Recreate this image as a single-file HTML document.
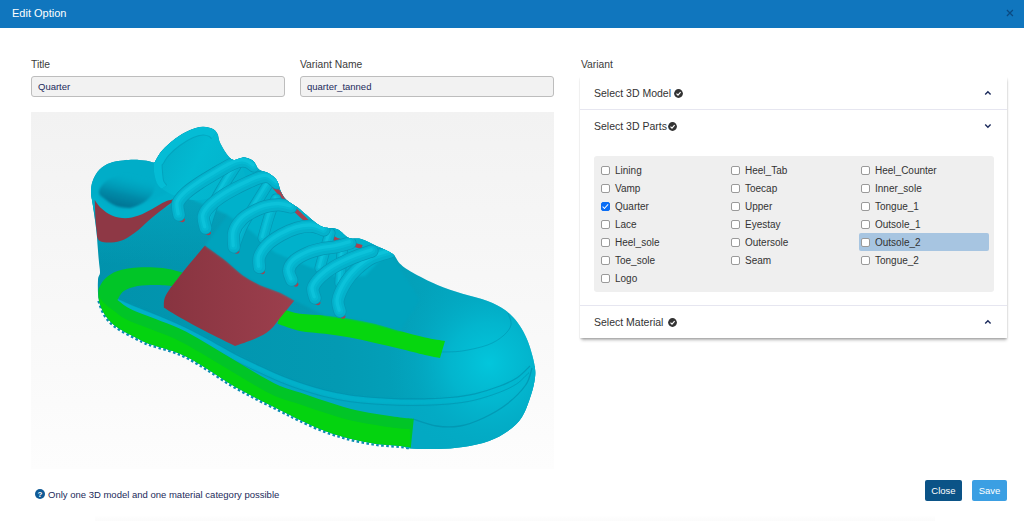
<!DOCTYPE html>
<html><head><meta charset="utf-8">
<style>
*{box-sizing:border-box;margin:0;padding:0}
html,body{width:1024px;height:521px;overflow:hidden;background:#fff;font-family:"Liberation Sans",sans-serif;color:#3a3a3a}
.abs{position:absolute}
.hdr{left:0;top:0;width:1024px;height:27.5px;background:#1076be}
.hdr .t{left:12px;top:6px;font-size:11px;color:#fff;line-height:14px}
.lbl{font-size:10.3px;line-height:12px;color:#3b3b3b}
.inp{height:21px;border:1px solid #bdbdbd;border-radius:3px;background:#f2f2f2;font-size:9.5px;line-height:19px;padding-left:6px;color:#1c2b5c}
.img{left:31px;top:112px;width:523px;height:357px;background:linear-gradient(#f2f2f2,#fdfdfd)}
.panel{left:580px;top:77px;width:427px;height:261px;background:#fff;box-shadow:0 2.5px 3px -0.5px rgba(0,0,0,.3),0 1px 1.5px rgba(0,0,0,.12)}
.ah{left:14px;font-size:10.5px;line-height:14px;color:#333}
.div{left:0;width:427px;height:1px;background:#e6e6f0}
.box{left:14px;top:79px;width:399.5px;height:136px;background:#efefef;border-radius:3px}
.it{position:absolute;width:130px;height:18px;font-size:10px;line-height:19.6px;color:#333;padding-left:16px;border-radius:2px}
.it i{position:absolute;left:2px;top:4.5px;width:9px;height:9px;border:1px solid #9a9a9a;border-radius:2px;background:#fff}
.it.on i:after{content:"";position:absolute;left:2.2px;top:0.2px;width:2.2px;height:4.6px;border:solid #fff;border-width:0 1.3px 1.3px 0;transform:rotate(42deg)}
.it.on i{background:#0b6ef5;border-color:#0b6ef5}
.it.hl{background:#a7c5e1}
.btn{top:480px;height:21px;border-radius:2px;color:#fff;font-size:9.5px;line-height:21px;text-align:center}
</style></head><body>
<div class="abs hdr"><div class="abs t">Edit Option</div>
<svg class="abs" style="left:1006px;top:9px" width="8" height="8" viewBox="0 0 8 8"><path d="M0.9 1L6.9 7M6.9 1L0.9 7" stroke="#0b4a82" stroke-width="1.2" fill="none"/></svg>
</div>
<div class="abs lbl" style="left:31px;top:59px">Title</div>
<div class="abs lbl" style="left:300px;top:59px">Variant Name</div>
<div class="abs lbl" style="left:581px;top:59px">Variant</div>
<div class="abs inp" style="left:31px;top:76px;width:254px">Quarter</div>
<div class="abs inp" style="left:300px;top:76px;width:254px">quarter_tanned</div>
<div class="abs img" id="img"></div>
<svg class="abs" style="left:31px;top:112px" width="523" height="357" viewBox="31 112 523 357">
<defs>
<linearGradient id="gb" gradientUnits="userSpaceOnUse" x1="90" y1="0" x2="540" y2="0"><stop offset="0" stop-color="#0192ac"/><stop offset=".55" stop-color="#039ab3"/><stop offset=".8" stop-color="#03a4bd"/><stop offset="1" stop-color="#03a6c0"/></linearGradient>
<radialGradient id="gtoe" gradientUnits="userSpaceOnUse" cx="489" cy="363" r="100"><stop offset="0" stop-color="#03c6dc" stop-opacity="1"/><stop offset=".4" stop-color="#03bbd3" stop-opacity=".75"/><stop offset=".75" stop-color="#03aec8" stop-opacity=".3"/><stop offset="1" stop-color="#03aac4" stop-opacity="0"/></radialGradient>
<linearGradient id="gop" gradientUnits="userSpaceOnUse" x1="126" y1="208" x2="134" y2="175"><stop offset="0" stop-color="#027393"/><stop offset=".35" stop-color="#0288a6" stop-opacity=".95"/><stop offset=".7" stop-color="#039fbb" stop-opacity=".6"/><stop offset="1" stop-color="#03adc8" stop-opacity="0"/></linearGradient>
<linearGradient id="gtng" gradientUnits="userSpaceOnUse" x1="160" y1="150" x2="235" y2="190"><stop offset="0" stop-color="#03aec8"/><stop offset=".45" stop-color="#02bad2"/><stop offset="1" stop-color="#03b2cb"/></linearGradient>
<linearGradient id="gred" gradientUnits="userSpaceOnUse" x1="165" y1="300" x2="295" y2="300"><stop offset="0" stop-color="#883440"/><stop offset="1" stop-color="#9c3f4d"/></linearGradient>
<filter id="bl" x="-20%" y="-20%" width="140%" height="140%"><feGaussianBlur stdDeviation="2.2"/></filter>
<filter id="bl1" x="-20%" y="-20%" width="140%" height="140%"><feGaussianBlur stdDeviation="1"/></filter>
<linearGradient id="gup" gradientUnits="userSpaceOnUse" x1="0" y1="195" x2="0" y2="265"><stop offset="0" stop-color="#04a2bc" stop-opacity=".9"/><stop offset="1" stop-color="#04a2bc" stop-opacity="0"/></linearGradient>
<clipPath id="ct"><path d="M154.0 163.0C154.4 160.2 155.6 160.2 157.0 158.0C158.4 155.8 159.5 153.2 162.5 150.0C165.5 146.8 170.4 142.1 175.0 138.8C179.6 135.4 185.4 132.0 190.0 130.0C194.6 128.0 198.8 127.0 202.5 126.8C206.2 126.5 210.0 127.6 212.5 128.8C215.0 129.9 216.2 131.5 217.5 133.8C218.8 136.0 218.3 139.0 220.0 142.5C221.7 146.0 225.2 152.1 227.5 155.0C229.8 157.9 230.8 156.7 233.7 160.0C236.6 163.3 245.6 170.0 245.0 175.0C244.4 180.0 237.5 185.8 230.0 190.0C222.5 194.2 209.0 199.0 200.0 200.0C191.0 201.0 182.0 197.7 176.0 196.0C170.0 194.3 167.0 191.8 164.0 190.0C161.0 188.2 159.6 187.5 158.0 185.0C156.4 182.5 155.2 178.7 154.5 175.0C153.8 171.3 153.6 165.8 154.0 163.0Z"/></clipPath>
<clipPath id="cb"><path d="M91.0 192.0C91.0 188.4 91.3 184.7 92.7 181.0C94.1 177.3 96.5 172.7 99.6 169.6C102.6 166.5 105.8 164.3 111.0 162.7C116.2 161.1 125.1 160.1 131.0 159.8C136.9 159.5 142.8 160.4 146.6 160.8C150.4 161.2 152.3 163.0 154.0 162.5C155.7 162.0 155.6 160.1 157.0 158.0C158.4 155.9 159.5 153.2 162.5 150.0C165.5 146.8 170.4 142.1 175.0 138.8C179.6 135.4 185.4 132.0 190.0 130.0C194.6 128.0 198.8 127.0 202.5 126.8C206.2 126.5 210.0 127.6 212.5 128.8C215.0 129.9 216.2 131.5 217.5 133.8C218.8 136.0 218.3 139.0 220.0 142.5C221.7 146.0 225.2 152.1 227.5 155.0C229.8 157.9 231.0 159.6 233.7 160.0C236.4 160.4 240.3 157.3 243.5 157.4C246.7 157.5 250.4 158.8 253.0 160.8C255.6 162.8 256.3 167.5 259.0 169.6C261.7 171.7 266.0 171.7 269.0 173.5C272.0 175.3 274.9 177.4 276.8 180.3C278.8 183.2 279.1 187.7 280.7 191.0C282.3 194.3 283.6 197.2 286.5 200.0C289.4 202.8 294.8 205.3 298.0 207.7C301.2 210.1 303.3 212.3 306.0 214.6C308.7 216.9 311.1 219.3 314.0 221.4C316.9 223.5 319.8 226.0 323.7 227.3C327.6 228.6 333.2 227.5 337.4 229.3C341.6 231.1 345.1 236.4 349.0 238.0C352.9 239.6 356.4 237.7 361.0 239.0C365.6 240.3 371.2 243.5 376.5 246.0C381.8 248.5 388.6 250.8 392.5 253.8C396.4 256.7 396.7 260.6 400.0 263.8C403.3 266.9 406.2 269.0 412.5 272.5C418.8 276.0 429.2 281.5 437.5 285.0C445.8 288.5 454.2 291.1 462.5 293.8C470.8 296.4 480.4 298.3 487.5 301.0C494.6 303.7 500.0 306.4 505.0 310.0C510.0 313.6 514.2 318.3 517.5 322.5C520.8 326.7 522.9 330.8 525.0 335.0C527.1 339.2 528.4 342.5 530.0 347.5C531.6 352.5 533.7 360.0 534.5 365.0C535.3 370.0 535.6 372.5 535.0 377.5C534.4 382.5 533.2 388.4 531.0 395.0C528.8 401.6 525.8 411.0 522.0 417.0C518.2 423.0 513.5 427.0 508.0 431.0C502.5 435.0 496.5 438.3 489.0 441.0C481.5 443.7 471.6 445.7 463.0 447.0C454.4 448.3 446.2 448.8 437.5 449.0C428.8 449.2 417.2 449.0 411.0 448.5C404.8 448.0 406.0 446.8 400.0 446.0C394.0 445.2 383.3 445.0 375.0 443.8C366.7 442.5 358.3 440.9 350.0 438.8C341.7 436.6 333.3 434.1 325.0 431.0C316.7 427.9 307.5 423.5 300.0 420.0C292.5 416.5 287.5 413.8 280.0 410.0C272.5 406.2 263.3 401.9 255.0 397.5C246.7 393.1 238.3 388.8 230.0 383.8C221.7 378.8 213.3 372.5 205.0 367.5C196.7 362.5 188.8 357.5 180.0 353.8C171.2 350.0 158.8 347.1 152.5 345.0C146.2 342.9 148.3 343.9 142.5 341.0C136.7 338.1 123.8 331.8 117.5 327.5C111.2 323.2 108.1 319.6 105.0 315.0C101.9 310.4 99.9 305.8 98.8 300.0C97.6 294.2 97.8 284.6 98.0 280.0C98.2 275.4 99.9 275.8 100.0 272.5C100.1 269.2 99.2 265.9 98.8 260.0C98.2 254.1 97.6 243.7 97.0 237.0C96.4 230.3 95.8 225.8 95.0 220.0C94.2 214.2 93.2 207.2 92.5 202.5C91.8 197.8 91.0 195.6 91.0 192.0Z"/></clipPath>
</defs>
<path d="M98.8 300.0C99.8 302.5 101.9 310.4 105.0 315.0C108.1 319.6 111.2 323.2 117.5 327.5C123.8 331.8 136.7 338.1 142.5 341.0C148.3 343.9 146.2 342.9 152.5 345.0C158.8 347.1 171.2 350.0 180.0 353.8C188.8 357.5 196.7 362.5 205.0 367.5C213.3 372.5 221.7 378.8 230.0 383.8C238.3 388.8 246.7 393.1 255.0 397.5C263.3 401.9 272.5 406.2 280.0 410.0C287.5 413.8 292.5 416.5 300.0 420.0C307.5 423.5 316.7 427.9 325.0 431.0C333.3 434.1 341.7 436.6 350.0 438.8C358.3 440.9 366.7 442.5 375.0 443.8C383.3 445.0 394.0 445.4 400.0 446.0C406.0 446.6 409.0 447.2 410.8 447.5" stroke="#0a8bb0" stroke-width="2.4" stroke-dasharray="2.6 2.4" fill="none" transform="translate(-0.4,0.9)"/>
<path d="M91.0 192.0C91.0 188.4 91.3 184.7 92.7 181.0C94.1 177.3 96.5 172.7 99.6 169.6C102.6 166.5 105.8 164.3 111.0 162.7C116.2 161.1 125.1 160.1 131.0 159.8C136.9 159.5 142.8 160.4 146.6 160.8C150.4 161.2 152.3 163.0 154.0 162.5C155.7 162.0 155.6 160.1 157.0 158.0C158.4 155.9 159.5 153.2 162.5 150.0C165.5 146.8 170.4 142.1 175.0 138.8C179.6 135.4 185.4 132.0 190.0 130.0C194.6 128.0 198.8 127.0 202.5 126.8C206.2 126.5 210.0 127.6 212.5 128.8C215.0 129.9 216.2 131.5 217.5 133.8C218.8 136.0 218.3 139.0 220.0 142.5C221.7 146.0 225.2 152.1 227.5 155.0C229.8 157.9 231.0 159.6 233.7 160.0C236.4 160.4 240.3 157.3 243.5 157.4C246.7 157.5 250.4 158.8 253.0 160.8C255.6 162.8 256.3 167.5 259.0 169.6C261.7 171.7 266.0 171.7 269.0 173.5C272.0 175.3 274.9 177.4 276.8 180.3C278.8 183.2 279.1 187.7 280.7 191.0C282.3 194.3 283.6 197.2 286.5 200.0C289.4 202.8 294.8 205.3 298.0 207.7C301.2 210.1 303.3 212.3 306.0 214.6C308.7 216.9 311.1 219.3 314.0 221.4C316.9 223.5 319.8 226.0 323.7 227.3C327.6 228.6 333.2 227.5 337.4 229.3C341.6 231.1 345.1 236.4 349.0 238.0C352.9 239.6 356.4 237.7 361.0 239.0C365.6 240.3 371.2 243.5 376.5 246.0C381.8 248.5 388.6 250.8 392.5 253.8C396.4 256.7 396.7 260.6 400.0 263.8C403.3 266.9 406.2 269.0 412.5 272.5C418.8 276.0 429.2 281.5 437.5 285.0C445.8 288.5 454.2 291.1 462.5 293.8C470.8 296.4 480.4 298.3 487.5 301.0C494.6 303.7 500.0 306.4 505.0 310.0C510.0 313.6 514.2 318.3 517.5 322.5C520.8 326.7 522.9 330.8 525.0 335.0C527.1 339.2 528.4 342.5 530.0 347.5C531.6 352.5 533.7 360.0 534.5 365.0C535.3 370.0 535.6 372.5 535.0 377.5C534.4 382.5 533.2 388.4 531.0 395.0C528.8 401.6 525.8 411.0 522.0 417.0C518.2 423.0 513.5 427.0 508.0 431.0C502.5 435.0 496.5 438.3 489.0 441.0C481.5 443.7 471.6 445.7 463.0 447.0C454.4 448.3 446.2 448.8 437.5 449.0C428.8 449.2 417.2 449.0 411.0 448.5C404.8 448.0 406.0 446.8 400.0 446.0C394.0 445.2 383.3 445.0 375.0 443.8C366.7 442.5 358.3 440.9 350.0 438.8C341.7 436.6 333.3 434.1 325.0 431.0C316.7 427.9 307.5 423.5 300.0 420.0C292.5 416.5 287.5 413.8 280.0 410.0C272.5 406.2 263.3 401.9 255.0 397.5C246.7 393.1 238.3 388.8 230.0 383.8C221.7 378.8 213.3 372.5 205.0 367.5C196.7 362.5 188.8 357.5 180.0 353.8C171.2 350.0 158.8 347.1 152.5 345.0C146.2 342.9 148.3 343.9 142.5 341.0C136.7 338.1 123.8 331.8 117.5 327.5C111.2 323.2 108.1 319.6 105.0 315.0C101.9 310.4 99.9 305.8 98.8 300.0C97.6 294.2 97.8 284.6 98.0 280.0C98.2 275.4 99.9 275.8 100.0 272.5C100.1 269.2 99.2 265.9 98.8 260.0C98.2 254.1 97.6 243.7 97.0 237.0C96.4 230.3 95.8 225.8 95.0 220.0C94.2 214.2 93.2 207.2 92.5 202.5C91.8 197.8 91.0 195.6 91.0 192.0Z" fill="url(#gb)"/>
<g clip-path="url(#cb)">
<rect x="90" y="190" width="230" height="80" fill="url(#gup)"/>
<path d="M86 206L86 165L100 152L160 152L184 196Q140 226 100 215Z" fill="#03adc8" filter="url(#bl1)"/>
<path d="M99.0 193.0C99.4 195.6 103.3 197.7 105.5 199.5C107.7 201.3 109.8 202.8 112.0 204.0C114.2 205.2 115.8 206.2 119.0 206.8C122.2 207.4 127.0 208.4 131.0 207.8C134.9 207.2 139.7 204.6 142.7 203.0C145.7 201.4 147.2 199.8 149.0 198.0C150.8 196.2 152.7 194.3 153.5 192.0C154.3 189.7 154.9 186.5 154.0 184.0C153.1 181.5 151.7 178.7 148.0 177.0C144.3 175.3 137.7 174.0 132.0 174.0C126.3 174.0 118.8 175.3 114.0 177.0C109.2 178.7 105.5 181.3 103.0 184.0C100.5 186.7 98.6 190.4 99.0 193.0Z" fill="url(#gop)" filter="url(#bl1)"/>
<path d="M92.0 197.0C92.8 198.0 94.8 200.9 97.0 203.0C99.2 205.1 102.0 207.8 105.0 209.5C108.0 211.2 111.5 212.6 115.0 213.5C118.5 214.4 122.0 215.1 126.0 214.8C130.0 214.5 134.5 213.2 139.0 211.5C143.5 209.8 148.5 206.8 153.0 204.5C157.5 202.2 161.8 199.7 166.0 198.0C170.2 196.3 176.0 195.1 178.0 194.5" stroke="#03b0ca" stroke-width="8" fill="none" filter="url(#bl1)"/>
<path d="M117.0 298.0C120.0 299.3 127.8 303.0 135.0 306.0C142.2 309.0 151.7 312.5 160.0 316.0C168.3 319.5 176.7 323.0 185.0 327.0C193.3 331.0 201.7 335.5 210.0 340.0C218.3 344.5 226.7 349.7 235.0 354.0C243.3 358.3 252.5 362.5 260.0 366.0C267.5 369.5 273.3 372.2 280.0 375.0C286.7 377.8 292.5 380.0 300.0 382.5C307.5 385.0 316.7 387.9 325.0 390.0C333.3 392.1 341.7 393.8 350.0 395.0C358.3 396.2 366.7 396.9 375.0 397.5C383.3 398.1 391.7 398.5 400.0 398.8C408.3 399.0 416.7 399.0 425.0 398.8C433.3 398.5 441.7 398.3 450.0 397.5C458.3 396.7 466.7 395.7 475.0 393.8C483.3 391.8 492.9 388.7 500.0 386.0C507.1 383.3 512.5 380.8 517.5 377.5C522.5 374.2 527.9 367.9 530.0 366.0L560 366L560 470L100 470Z" fill="#03a9c3"/>
<circle cx="489" cy="363" r="100" fill="url(#gtoe)"/>
<path d="M117.0 298.0C120.0 299.3 127.8 303.0 135.0 306.0C142.2 309.0 151.7 312.5 160.0 316.0C168.3 319.5 176.7 323.0 185.0 327.0C193.3 331.0 201.7 335.5 210.0 340.0C218.3 344.5 226.7 349.7 235.0 354.0C243.3 358.3 252.5 362.5 260.0 366.0C267.5 369.5 273.3 372.2 280.0 375.0C286.7 377.8 292.5 380.0 300.0 382.5C307.5 385.0 316.7 387.9 325.0 390.0C333.3 392.1 341.7 393.8 350.0 395.0C358.3 396.2 366.7 396.9 375.0 397.5C383.3 398.1 391.7 398.5 400.0 398.8C408.3 399.0 416.7 399.0 425.0 398.8C433.3 398.5 441.7 398.3 450.0 397.5C458.3 396.7 466.7 395.7 475.0 393.8C483.3 391.8 492.9 388.7 500.0 386.0C507.1 383.3 512.5 380.8 517.5 377.5C522.5 374.2 527.9 367.9 530.0 366.0" stroke="#04b6cf" stroke-width="5" fill="none" opacity=".6" transform="translate(0,3)" filter="url(#bl1)"/>
<path d="M117.0 298.0C120.0 299.3 127.8 303.0 135.0 306.0C142.2 309.0 151.7 312.5 160.0 316.0C168.3 319.5 176.7 323.0 185.0 327.0C193.3 331.0 201.7 335.5 210.0 340.0C218.3 344.5 226.7 349.7 235.0 354.0C243.3 358.3 252.5 362.5 260.0 366.0C267.5 369.5 273.3 372.2 280.0 375.0C286.7 377.8 292.5 380.0 300.0 382.5C307.5 385.0 316.7 387.9 325.0 390.0C333.3 392.1 341.7 393.8 350.0 395.0C358.3 396.2 366.7 396.9 375.0 397.5C383.3 398.1 391.7 398.5 400.0 398.8C408.3 399.0 416.7 399.0 425.0 398.8C433.3 398.5 441.7 398.3 450.0 397.5C458.3 396.7 466.7 395.7 475.0 393.8C483.3 391.8 492.9 388.7 500.0 386.0C507.1 383.3 512.5 380.8 517.5 377.5C522.5 374.2 527.9 367.9 530.0 366.0" stroke="#028aa6" stroke-width="1.2" fill="none" opacity=".6"/>
<path d="M117.0 298.0C120.0 299.3 127.8 303.0 135.0 306.0C142.2 309.0 151.7 312.5 160.0 316.0C168.3 319.5 176.7 323.0 185.0 327.0C193.3 331.0 201.7 335.5 210.0 340.0C218.3 344.5 226.7 349.7 235.0 354.0C243.3 358.3 252.5 362.5 260.0 366.0C267.5 369.5 273.3 372.2 280.0 375.0C286.7 377.8 292.5 380.0 300.0 382.5C307.5 385.0 316.7 387.9 325.0 390.0C333.3 392.1 341.7 393.8 350.0 395.0C358.3 396.2 366.7 396.9 375.0 397.5C383.3 398.1 391.7 398.5 400.0 398.8C408.3 399.0 416.7 399.0 425.0 398.8C433.3 398.5 441.7 398.3 450.0 397.5C458.3 396.7 466.7 395.7 475.0 393.8C483.3 391.8 492.9 388.7 500.0 386.0C507.1 383.3 512.5 380.8 517.5 377.5C522.5 374.2 527.9 367.9 530.0 366.0" stroke="#028aa6" stroke-width="1" fill="none" opacity=".5" transform="translate(-1,6.5)"/>
<path d="M413.0 419.0C416.9 420.2 428.8 424.8 436.6 426.0C444.4 427.2 452.2 427.3 460.0 426.0C467.8 424.7 475.7 421.7 483.5 418.0C491.3 414.3 500.0 409.5 507.0 404.0C514.0 398.5 521.5 391.0 525.7 385.0C529.9 379.0 531.0 370.8 532.0 368.0" stroke="#028aa6" stroke-width="1.3" fill="none" opacity=".6"/>
<path d="M440.0 352.0C443.7 351.8 454.1 352.2 462.0 351.0C469.9 349.8 480.7 347.5 487.5 345.0C494.3 342.5 499.1 339.3 503.0 336.0C506.9 332.7 510.2 328.8 511.0 325.0C511.8 321.2 508.5 315.0 508.0 313.0" stroke="#028aa6" stroke-width="1" fill="none" opacity=".45"/>
<path d="M117.5 300.0C119.6 301.5 123.8 305.6 130.0 308.8C136.2 311.9 146.7 315.4 155.0 318.8C163.3 322.1 171.7 324.8 180.0 328.8C188.3 332.7 196.7 337.7 205.0 342.5C213.3 347.3 221.7 352.5 230.0 357.5C238.3 362.5 246.7 367.8 255.0 372.5C263.3 377.2 272.5 382.7 280.0 386.0C287.5 389.3 292.5 390.0 300.0 392.5C307.5 395.0 316.7 398.3 325.0 401.0C333.3 403.7 341.7 406.6 350.0 408.8C358.3 410.9 366.7 412.3 375.0 413.8C383.3 415.2 393.5 416.7 400.0 417.5C406.5 418.3 411.5 418.5 413.8 418.8L410.8 447.5C409.0 447.2 406.0 446.6 400.0 446.0C394.0 445.4 383.3 445.0 375.0 443.8C366.7 442.5 358.3 440.9 350.0 438.8C341.7 436.6 333.3 434.1 325.0 431.0C316.7 427.9 307.5 423.5 300.0 420.0C292.5 416.5 287.5 413.8 280.0 410.0C272.5 406.2 263.3 401.9 255.0 397.5C246.7 393.1 238.3 388.8 230.0 383.8C221.7 378.8 213.3 372.5 205.0 367.5C196.7 362.5 188.8 357.5 180.0 353.8C171.2 350.0 158.8 347.1 152.5 345.0C146.2 342.9 148.3 343.9 142.5 341.0C136.7 338.1 123.8 331.8 117.5 327.5C111.2 323.2 108.1 319.6 105.0 315.0C101.9 310.4 99.8 304.3 98.8 300.0C97.7 295.7 98.5 290.8 98.5 289.0C99.6 287.3 101.8 281.8 105.0 278.8C108.2 275.8 112.1 272.9 117.5 271.0C122.9 269.1 130.0 268.0 137.5 267.5C145.0 267.0 155.0 267.2 162.5 268.0C170.0 268.8 179.2 271.8 182.5 272.5L172.5 286.0C169.6 285.8 160.8 285.0 155.0 285.0C149.2 285.0 142.7 285.0 137.5 286.0C132.3 287.0 127.1 288.7 123.8 291.0C120.4 293.3 118.5 298.5 117.5 300.0Z" fill="#01c527"/>
<path d="M98.5 296.0C99.4 297.2 101.5 300.6 104.0 303.0C106.5 305.4 109.8 307.8 113.5 310.5C117.2 313.2 119.8 316.1 126.0 319.2C132.2 322.4 142.7 325.9 151.0 329.2C159.3 332.6 167.7 335.3 176.0 339.2C184.3 343.2 192.7 348.2 201.0 353.0C209.3 357.8 217.7 363.0 226.0 368.0C234.3 373.0 242.7 378.2 251.0 383.0C259.3 387.8 268.5 393.2 276.0 396.5C283.5 399.8 288.5 400.5 296.0 403.0C303.5 405.5 312.7 408.8 321.0 411.5C329.3 414.2 337.7 417.1 346.0 419.2C354.3 421.4 362.7 422.8 371.0 424.2C379.3 425.7 389.5 427.2 396.0 428.0C402.5 428.8 407.5 429.0 409.8 429.2L410.8 447.5C409.0 447.2 406.0 446.6 400.0 446.0C394.0 445.4 383.3 445.0 375.0 443.8C366.7 442.5 358.3 440.9 350.0 438.8C341.7 436.6 333.3 434.1 325.0 431.0C316.7 427.9 307.5 423.5 300.0 420.0C292.5 416.5 287.5 413.8 280.0 410.0C272.5 406.2 263.3 401.9 255.0 397.5C246.7 393.1 238.3 388.8 230.0 383.8C221.7 378.8 213.3 372.5 205.0 367.5C196.7 362.5 188.8 357.5 180.0 353.8C171.2 350.0 158.8 347.1 152.5 345.0C146.2 342.9 148.3 343.9 142.5 341.0C136.7 338.1 123.8 331.8 117.5 327.5C111.2 323.2 108.1 319.6 105.0 315.0C101.9 310.4 99.8 302.5 98.8 300.0Z" fill="#04d30f"/>
<path d="M282.0 309.0C285.0 309.8 292.8 312.7 300.0 313.8C307.2 314.8 316.7 314.7 325.0 315.5C333.3 316.3 341.7 317.4 350.0 318.8C358.3 320.1 366.7 321.7 375.0 323.8C383.3 325.8 391.7 328.7 400.0 331.0C408.3 333.3 417.5 335.8 425.0 337.5C432.5 339.2 441.7 340.4 445.0 341.0L440.0 358.0C437.5 357.5 431.7 356.5 425.0 355.0C418.3 353.5 408.3 350.8 400.0 348.8C391.7 346.8 383.3 344.9 375.0 343.0C366.7 341.1 358.3 339.0 350.0 337.5C341.7 336.0 333.3 334.8 325.0 333.8C316.7 332.7 307.9 332.7 300.0 331.0C292.1 329.3 281.2 325.0 277.5 323.8Z" fill="#06d60f"/>
<path d="M205.0 245.5C208.3 247.9 218.8 255.1 225.0 260.0C231.2 264.9 236.7 270.8 242.5 275.0C248.3 279.2 253.8 282.1 260.0 285.0C266.2 287.9 274.2 289.9 280.0 292.5C285.8 295.1 292.1 299.2 294.5 300.5C292.5 302.9 286.6 310.1 282.5 315.0C278.4 319.9 274.6 326.0 270.0 330.0C265.4 334.0 260.8 336.1 255.0 338.8C249.2 341.4 238.3 344.8 235.0 346.0C230.0 343.5 214.2 335.8 205.0 331.0C195.8 326.2 186.9 321.4 180.0 317.5C173.1 313.6 166.5 309.2 163.8 307.5C164.1 305.4 162.9 300.8 166.0 295.0C169.1 289.2 176.0 280.8 182.5 272.5C189.0 264.2 201.2 250.0 205.0 245.5Z" fill="url(#gred)"/>
<path d="M94.7 200.0C95.8 201.3 98.1 205.4 101.0 208.0C103.9 210.6 107.9 213.9 111.9 215.6C116.0 217.3 120.8 218.3 125.3 218.3C129.8 218.3 134.2 217.2 138.7 215.6C143.2 214.0 147.7 211.2 152.2 208.9C156.7 206.6 161.3 203.2 165.6 201.5C169.8 199.8 175.7 199.2 177.7 198.8C175.7 200.2 169.8 203.8 165.6 206.9C161.3 210.0 156.7 213.8 152.2 217.6C147.7 221.4 142.5 226.6 138.7 229.7C134.9 232.8 132.4 234.5 129.3 236.4C126.2 238.3 123.4 240.0 120.0 241.0C116.6 242.0 112.4 242.5 109.0 242.5C105.6 242.5 101.8 242.0 99.8 241.0C97.8 240.0 97.5 237.2 97.0 236.4L95.5 220Z" fill="#8e3845"/>
<path d="M230.0 212.0L205.0 245.5L225.0 260.0L242.5 275.0L260.0 285.0L280.0 292.5L294.5 300.5L325.0 315.5L350.0 318.8L375.0 323.8L400.0 331.0L420.0 300.0L392.0 256.0L300.0 200.0Z" fill="#04a3bd" filter="url(#bl1)"/>
<path d="M160.0 183.0L170.0 187.0L195.5 201.0L226.8 214.6L252.3 232.3L275.0 252.7L312.0 268.0L340.0 278.0L365.0 276.0L386.0 254.0L380.0 240.0L300.0 200.0L250.0 150.0Z" fill="#03b1cb" filter="url(#bl1)"/>
<path d="M268 180L290 205L312 226L337 240L362 247" stroke="#a8424f" stroke-width="4" fill="none"/>
<path d="M154.0 163.0C154.4 160.2 155.6 160.2 157.0 158.0C158.4 155.8 159.5 153.2 162.5 150.0C165.5 146.8 170.4 142.1 175.0 138.8C179.6 135.4 185.4 132.0 190.0 130.0C194.6 128.0 198.8 127.0 202.5 126.8C206.2 126.5 210.0 127.6 212.5 128.8C215.0 129.9 216.2 131.5 217.5 133.8C218.8 136.0 218.3 139.0 220.0 142.5C221.7 146.0 225.2 152.1 227.5 155.0C229.8 157.9 230.8 156.7 233.7 160.0C236.6 163.3 245.6 170.0 245.0 175.0C244.4 180.0 237.5 185.8 230.0 190.0C222.5 194.2 209.0 199.0 200.0 200.0C191.0 201.0 182.0 197.7 176.0 196.0C170.0 194.3 167.0 191.8 164.0 190.0C161.0 188.2 159.6 187.5 158.0 185.0C156.4 182.5 155.2 178.7 154.5 175.0C153.8 171.3 153.6 165.8 154.0 163.0Z" fill="url(#gtng)"/>
<g clip-path="url(#ct)"><path d="M160.0 190.0C159.3 189.0 156.9 186.5 156.0 184.0C155.1 181.5 154.8 178.5 154.5 175.0C154.2 171.5 153.6 165.8 154.0 163.0C154.4 160.2 155.6 160.2 157.0 158.0C158.4 155.8 159.5 153.2 162.5 150.0C165.5 146.8 170.4 142.1 175.0 138.8C179.6 135.4 185.4 132.0 190.0 130.0C194.6 128.0 198.8 127.0 202.5 126.8C206.2 126.5 210.2 127.9 212.5 128.8C214.8 129.6 215.8 131.5 216.5 132.0" stroke="#0399b5" stroke-width="17.5" fill="none" opacity=".55"/><path d="M160.0 190.0C159.3 189.0 156.9 186.5 156.0 184.0C155.1 181.5 154.8 178.5 154.5 175.0C154.2 171.5 153.6 165.8 154.0 163.0C154.4 160.2 155.6 160.2 157.0 158.0C158.4 155.8 159.5 153.2 162.5 150.0C165.5 146.8 170.4 142.1 175.0 138.8C179.6 135.4 185.4 132.0 190.0 130.0C194.6 128.0 198.8 127.0 202.5 126.8C206.2 126.5 210.2 127.9 212.5 128.8C214.8 129.6 215.8 131.5 216.5 132.0" stroke="#04bcd5" stroke-width="15.5" fill="none"/></g>
<ellipse cx="180.6" cy="218.9" rx="4.6" ry="2.6" fill="#a8424f" transform="rotate(25 180.6 218.9)"/><ellipse cx="206.6" cy="231.9" rx="4.6" ry="2.6" fill="#a8424f" transform="rotate(25 206.6 231.9)"/><ellipse cx="235.1" cy="250.4" rx="4.6" ry="2.6" fill="#a8424f" transform="rotate(25 235.1 250.4)"/><ellipse cx="260.6" cy="270.9" rx="4.6" ry="2.6" fill="#a8424f" transform="rotate(25 260.6 270.9)"/><ellipse cx="294.1" cy="283.4" rx="4.6" ry="2.6" fill="#a8424f" transform="rotate(25 294.1 283.4)"/><ellipse cx="316.1" cy="301.9" rx="4.6" ry="2.6" fill="#a8424f" transform="rotate(25 316.1 301.9)"/><ellipse cx="341.1" cy="315.4" rx="4.6" ry="2.6" fill="#a8424f" transform="rotate(25 341.1 315.4)"/>
<path d="M206.0 226.0C207.2 222.5 210.0 211.8 213.0 205.0C216.0 198.2 220.2 191.5 224.0 185.0C227.8 178.5 234.0 169.2 236.0 166.0" stroke="#0497b3" stroke-width="11.0" fill="none" stroke-linecap="round"/><path d="M206.0 226.0C207.2 222.5 210.0 211.8 213.0 205.0C216.0 198.2 220.2 191.5 224.0 185.0C227.8 178.5 234.0 169.2 236.0 166.0" stroke="#04b1cb" stroke-width="9.6" fill="none" stroke-linecap="round"/><path d="M206.0 226.0C207.2 222.5 210.0 211.8 213.0 205.0C216.0 198.2 220.2 191.5 224.0 185.0C227.8 178.5 234.0 169.2 236.0 166.0" stroke="#05b9d2" stroke-width="6.0" fill="none" stroke-linecap="round" transform="translate(-0.5,-0.8)"/><path d="M206.0 226.0C207.2 222.5 210.0 211.8 213.0 205.0C216.0 198.2 220.2 191.5 224.0 185.0C227.8 178.5 234.0 169.2 236.0 166.0" stroke="#0cc2da" stroke-width="2.8" fill="none" stroke-linecap="round" transform="translate(-0.8,-1.2)"/><path d="M235.0 245.0C236.3 241.7 239.7 231.7 243.0 225.0C246.3 218.3 250.8 211.8 255.0 205.0C259.2 198.2 265.8 187.5 268.0 184.0" stroke="#0497b3" stroke-width="11.0" fill="none" stroke-linecap="round"/><path d="M235.0 245.0C236.3 241.7 239.7 231.7 243.0 225.0C246.3 218.3 250.8 211.8 255.0 205.0C259.2 198.2 265.8 187.5 268.0 184.0" stroke="#04b1cb" stroke-width="9.6" fill="none" stroke-linecap="round"/><path d="M235.0 245.0C236.3 241.7 239.7 231.7 243.0 225.0C246.3 218.3 250.8 211.8 255.0 205.0C259.2 198.2 265.8 187.5 268.0 184.0" stroke="#05b9d2" stroke-width="6.0" fill="none" stroke-linecap="round" transform="translate(-0.5,-0.8)"/><path d="M235.0 245.0C236.3 241.7 239.7 231.7 243.0 225.0C246.3 218.3 250.8 211.8 255.0 205.0C259.2 198.2 265.8 187.5 268.0 184.0" stroke="#0cc2da" stroke-width="2.8" fill="none" stroke-linecap="round" transform="translate(-0.8,-1.2)"/><path d="M263.0 238.0C263.8 235.0 266.5 225.0 268.0 220.0C269.5 215.0 270.7 211.5 272.0 208.0C273.3 204.5 275.3 200.5 276.0 199.0" stroke="#0497b3" stroke-width="11.0" fill="none" stroke-linecap="round"/><path d="M263.0 238.0C263.8 235.0 266.5 225.0 268.0 220.0C269.5 215.0 270.7 211.5 272.0 208.0C273.3 204.5 275.3 200.5 276.0 199.0" stroke="#04b1cb" stroke-width="9.6" fill="none" stroke-linecap="round"/><path d="M263.0 238.0C263.8 235.0 266.5 225.0 268.0 220.0C269.5 215.0 270.7 211.5 272.0 208.0C273.3 204.5 275.3 200.5 276.0 199.0" stroke="#05b9d2" stroke-width="6.0" fill="none" stroke-linecap="round" transform="translate(-0.5,-0.8)"/><path d="M263.0 238.0C263.8 235.0 266.5 225.0 268.0 220.0C269.5 215.0 270.7 211.5 272.0 208.0C273.3 204.5 275.3 200.5 276.0 199.0" stroke="#0cc2da" stroke-width="2.8" fill="none" stroke-linecap="round" transform="translate(-0.8,-1.2)"/><path d="M320.0 268.0C320.8 265.0 323.3 255.8 325.0 250.0C326.7 244.2 329.2 235.8 330.0 233.0" stroke="#0497b3" stroke-width="11.0" fill="none" stroke-linecap="round"/><path d="M320.0 268.0C320.8 265.0 323.3 255.8 325.0 250.0C326.7 244.2 329.2 235.8 330.0 233.0" stroke="#04b1cb" stroke-width="9.6" fill="none" stroke-linecap="round"/><path d="M320.0 268.0C320.8 265.0 323.3 255.8 325.0 250.0C326.7 244.2 329.2 235.8 330.0 233.0" stroke="#05b9d2" stroke-width="6.0" fill="none" stroke-linecap="round" transform="translate(-0.5,-0.8)"/><path d="M320.0 268.0C320.8 265.0 323.3 255.8 325.0 250.0C326.7 244.2 329.2 235.8 330.0 233.0" stroke="#0cc2da" stroke-width="2.8" fill="none" stroke-linecap="round" transform="translate(-0.8,-1.2)"/><path d="M340.0 283.0C340.2 280.2 340.6 271.8 341.0 266.0C341.4 260.2 342.2 251.0 342.5 248.0" stroke="#0497b3" stroke-width="11.0" fill="none" stroke-linecap="round"/><path d="M340.0 283.0C340.2 280.2 340.6 271.8 341.0 266.0C341.4 260.2 342.2 251.0 342.5 248.0" stroke="#04b1cb" stroke-width="9.6" fill="none" stroke-linecap="round"/><path d="M340.0 283.0C340.2 280.2 340.6 271.8 341.0 266.0C341.4 260.2 342.2 251.0 342.5 248.0" stroke="#05b9d2" stroke-width="6.0" fill="none" stroke-linecap="round" transform="translate(-0.5,-0.8)"/><path d="M340.0 283.0C340.2 280.2 340.6 271.8 341.0 266.0C341.4 260.2 342.2 251.0 342.5 248.0" stroke="#0cc2da" stroke-width="2.8" fill="none" stroke-linecap="round" transform="translate(-0.8,-1.2)"/><path d="M340.0 311.4C339.7 309.5 337.1 304.8 338.0 300.0C338.9 295.2 342.4 287.8 345.6 282.6C348.8 277.4 352.5 273.1 357.0 269.0C361.5 264.9 367.0 260.5 372.5 257.7C378.0 254.9 387.1 252.9 390.0 252.0" stroke="#0497b3" stroke-width="13.0" fill="none" stroke-linecap="round"/><path d="M340.0 311.4C339.7 309.5 337.1 304.8 338.0 300.0C338.9 295.2 342.4 287.8 345.6 282.6C348.8 277.4 352.5 273.1 357.0 269.0C361.5 264.9 367.0 260.5 372.5 257.7C378.0 254.9 387.1 252.9 390.0 252.0" stroke="#04b1cb" stroke-width="11.6" fill="none" stroke-linecap="round"/><path d="M340.0 311.4C339.7 309.5 337.1 304.8 338.0 300.0C338.9 295.2 342.4 287.8 345.6 282.6C348.8 277.4 352.5 273.1 357.0 269.0C361.5 264.9 367.0 260.5 372.5 257.7C378.0 254.9 387.1 252.9 390.0 252.0" stroke="#05b9d2" stroke-width="7.2" fill="none" stroke-linecap="round" transform="translate(-0.5,-0.8)"/><path d="M340.0 311.4C339.7 309.5 337.1 304.8 338.0 300.0C338.9 295.2 342.4 287.8 345.6 282.6C348.8 277.4 352.5 273.1 357.0 269.0C361.5 264.9 367.0 260.5 372.5 257.7C378.0 254.9 387.1 252.9 390.0 252.0" stroke="#0cc2da" stroke-width="3.4" fill="none" stroke-linecap="round" transform="translate(-0.8,-1.2)"/><path d="M315.0 298.0C314.7 296.3 312.1 291.5 313.0 288.0C313.9 284.5 317.2 280.5 320.7 277.0C324.2 273.5 328.6 270.2 334.0 267.0C339.4 263.8 346.7 260.4 353.0 257.7C359.3 255.0 368.8 252.1 372.0 251.0" stroke="#0497b3" stroke-width="13.0" fill="none" stroke-linecap="round"/><path d="M315.0 298.0C314.7 296.3 312.1 291.5 313.0 288.0C313.9 284.5 317.2 280.5 320.7 277.0C324.2 273.5 328.6 270.2 334.0 267.0C339.4 263.8 346.7 260.4 353.0 257.7C359.3 255.0 368.8 252.1 372.0 251.0" stroke="#04b1cb" stroke-width="11.6" fill="none" stroke-linecap="round"/><path d="M315.0 298.0C314.7 296.3 312.1 291.5 313.0 288.0C313.9 284.5 317.2 280.5 320.7 277.0C324.2 273.5 328.6 270.2 334.0 267.0C339.4 263.8 346.7 260.4 353.0 257.7C359.3 255.0 368.8 252.1 372.0 251.0" stroke="#05b9d2" stroke-width="7.2" fill="none" stroke-linecap="round" transform="translate(-0.5,-0.8)"/><path d="M315.0 298.0C314.7 296.3 312.1 291.5 313.0 288.0C313.9 284.5 317.2 280.5 320.7 277.0C324.2 273.5 328.6 270.2 334.0 267.0C339.4 263.8 346.7 260.4 353.0 257.7C359.3 255.0 368.8 252.1 372.0 251.0" stroke="#0cc2da" stroke-width="3.4" fill="none" stroke-linecap="round" transform="translate(-0.8,-1.2)"/><path d="M291.7 280.0C291.2 278.4 288.3 273.6 288.8 270.3C289.2 267.1 291.3 263.4 294.6 260.5C297.9 257.6 303.7 254.7 308.3 252.7C312.9 250.7 317.4 249.7 322.0 248.8C326.6 247.8 331.1 247.8 335.8 246.8C340.4 245.8 347.6 243.6 350.0 243.0" stroke="#0497b3" stroke-width="13.0" fill="none" stroke-linecap="round"/><path d="M291.7 280.0C291.2 278.4 288.3 273.6 288.8 270.3C289.2 267.1 291.3 263.4 294.6 260.5C297.9 257.6 303.7 254.7 308.3 252.7C312.9 250.7 317.4 249.7 322.0 248.8C326.6 247.8 331.1 247.8 335.8 246.8C340.4 245.8 347.6 243.6 350.0 243.0" stroke="#04b1cb" stroke-width="11.6" fill="none" stroke-linecap="round"/><path d="M291.7 280.0C291.2 278.4 288.3 273.6 288.8 270.3C289.2 267.1 291.3 263.4 294.6 260.5C297.9 257.6 303.7 254.7 308.3 252.7C312.9 250.7 317.4 249.7 322.0 248.8C326.6 247.8 331.1 247.8 335.8 246.8C340.4 245.8 347.6 243.6 350.0 243.0" stroke="#05b9d2" stroke-width="7.2" fill="none" stroke-linecap="round" transform="translate(-0.5,-0.8)"/><path d="M291.7 280.0C291.2 278.4 288.3 273.6 288.8 270.3C289.2 267.1 291.3 263.4 294.6 260.5C297.9 257.6 303.7 254.7 308.3 252.7C312.9 250.7 317.4 249.7 322.0 248.8C326.6 247.8 331.1 247.8 335.8 246.8C340.4 245.8 347.6 243.6 350.0 243.0" stroke="#0cc2da" stroke-width="3.4" fill="none" stroke-linecap="round" transform="translate(-0.8,-1.2)"/><path d="M259.4 267.4C259.4 265.6 258.1 260.4 259.4 256.6C260.7 252.8 263.6 248.4 267.2 244.8C270.8 241.2 276.1 237.8 281.0 235.0C285.9 232.2 291.4 229.7 296.6 228.2C301.8 226.7 307.7 225.9 312.2 226.2C316.8 226.5 322.0 229.4 324.0 230.0" stroke="#0497b3" stroke-width="13.0" fill="none" stroke-linecap="round"/><path d="M259.4 267.4C259.4 265.6 258.1 260.4 259.4 256.6C260.7 252.8 263.6 248.4 267.2 244.8C270.8 241.2 276.1 237.8 281.0 235.0C285.9 232.2 291.4 229.7 296.6 228.2C301.8 226.7 307.7 225.9 312.2 226.2C316.8 226.5 322.0 229.4 324.0 230.0" stroke="#04b1cb" stroke-width="11.6" fill="none" stroke-linecap="round"/><path d="M259.4 267.4C259.4 265.6 258.1 260.4 259.4 256.6C260.7 252.8 263.6 248.4 267.2 244.8C270.8 241.2 276.1 237.8 281.0 235.0C285.9 232.2 291.4 229.7 296.6 228.2C301.8 226.7 307.7 225.9 312.2 226.2C316.8 226.5 322.0 229.4 324.0 230.0" stroke="#05b9d2" stroke-width="7.2" fill="none" stroke-linecap="round" transform="translate(-0.5,-0.8)"/><path d="M259.4 267.4C259.4 265.6 258.1 260.4 259.4 256.6C260.7 252.8 263.6 248.4 267.2 244.8C270.8 241.2 276.1 237.8 281.0 235.0C285.9 232.2 291.4 229.7 296.6 228.2C301.8 226.7 307.7 225.9 312.2 226.2C316.8 226.5 322.0 229.4 324.0 230.0" stroke="#0cc2da" stroke-width="3.4" fill="none" stroke-linecap="round" transform="translate(-0.8,-1.2)"/><path d="M234.0 247.0C234.0 244.5 232.7 236.6 234.0 232.0C235.3 227.4 238.5 222.8 241.8 219.4C245.0 216.0 249.6 213.6 253.5 211.5C257.4 209.4 261.0 207.7 265.2 206.6C269.5 205.5 274.7 204.6 279.0 204.7C283.3 204.8 289.0 206.6 291.0 207.0" stroke="#0497b3" stroke-width="13.0" fill="none" stroke-linecap="round"/><path d="M234.0 247.0C234.0 244.5 232.7 236.6 234.0 232.0C235.3 227.4 238.5 222.8 241.8 219.4C245.0 216.0 249.6 213.6 253.5 211.5C257.4 209.4 261.0 207.7 265.2 206.6C269.5 205.5 274.7 204.6 279.0 204.7C283.3 204.8 289.0 206.6 291.0 207.0" stroke="#04b1cb" stroke-width="11.6" fill="none" stroke-linecap="round"/><path d="M234.0 247.0C234.0 244.5 232.7 236.6 234.0 232.0C235.3 227.4 238.5 222.8 241.8 219.4C245.0 216.0 249.6 213.6 253.5 211.5C257.4 209.4 261.0 207.7 265.2 206.6C269.5 205.5 274.7 204.6 279.0 204.7C283.3 204.8 289.0 206.6 291.0 207.0" stroke="#05b9d2" stroke-width="7.2" fill="none" stroke-linecap="round" transform="translate(-0.5,-0.8)"/><path d="M234.0 247.0C234.0 244.5 232.7 236.6 234.0 232.0C235.3 227.4 238.5 222.8 241.8 219.4C245.0 216.0 249.6 213.6 253.5 211.5C257.4 209.4 261.0 207.7 265.2 206.6C269.5 205.5 274.7 204.6 279.0 204.7C283.3 204.8 289.0 206.6 291.0 207.0" stroke="#0cc2da" stroke-width="3.4" fill="none" stroke-linecap="round" transform="translate(-0.8,-1.2)"/><path d="M205.5 228.0C205.2 226.1 202.9 220.0 203.5 216.5C204.1 213.0 206.1 210.2 209.0 207.0C211.9 203.8 216.7 200.0 221.0 197.0C225.3 194.0 230.0 191.4 234.6 189.0C239.2 186.6 244.1 184.2 248.3 182.3C252.5 180.4 256.6 178.4 260.0 177.5C263.4 176.6 266.2 176.1 269.0 177.0C271.8 177.9 275.7 182.0 277.0 183.0" stroke="#0497b3" stroke-width="13.0" fill="none" stroke-linecap="round"/><path d="M205.5 228.0C205.2 226.1 202.9 220.0 203.5 216.5C204.1 213.0 206.1 210.2 209.0 207.0C211.9 203.8 216.7 200.0 221.0 197.0C225.3 194.0 230.0 191.4 234.6 189.0C239.2 186.6 244.1 184.2 248.3 182.3C252.5 180.4 256.6 178.4 260.0 177.5C263.4 176.6 266.2 176.1 269.0 177.0C271.8 177.9 275.7 182.0 277.0 183.0" stroke="#04b1cb" stroke-width="11.6" fill="none" stroke-linecap="round"/><path d="M205.5 228.0C205.2 226.1 202.9 220.0 203.5 216.5C204.1 213.0 206.1 210.2 209.0 207.0C211.9 203.8 216.7 200.0 221.0 197.0C225.3 194.0 230.0 191.4 234.6 189.0C239.2 186.6 244.1 184.2 248.3 182.3C252.5 180.4 256.6 178.4 260.0 177.5C263.4 176.6 266.2 176.1 269.0 177.0C271.8 177.9 275.7 182.0 277.0 183.0" stroke="#05b9d2" stroke-width="7.2" fill="none" stroke-linecap="round" transform="translate(-0.5,-0.8)"/><path d="M205.5 228.0C205.2 226.1 202.9 220.0 203.5 216.5C204.1 213.0 206.1 210.2 209.0 207.0C211.9 203.8 216.7 200.0 221.0 197.0C225.3 194.0 230.0 191.4 234.6 189.0C239.2 186.6 244.1 184.2 248.3 182.3C252.5 180.4 256.6 178.4 260.0 177.5C263.4 176.6 266.2 176.1 269.0 177.0C271.8 177.9 275.7 182.0 277.0 183.0" stroke="#0cc2da" stroke-width="3.4" fill="none" stroke-linecap="round" transform="translate(-0.8,-1.2)"/><path d="M179.0 215.0C178.8 213.0 176.8 206.7 178.0 203.0C179.2 199.3 182.4 196.3 186.0 193.0C189.6 189.7 194.7 186.2 199.5 183.0C204.3 179.8 210.1 176.4 215.0 173.5C219.9 170.6 225.1 167.5 229.0 165.5C232.9 163.5 235.6 162.2 238.5 161.5C241.4 160.8 243.9 160.8 246.5 161.5C249.1 162.2 252.8 165.2 254.0 166.0" stroke="#0497b3" stroke-width="13.0" fill="none" stroke-linecap="round"/><path d="M179.0 215.0C178.8 213.0 176.8 206.7 178.0 203.0C179.2 199.3 182.4 196.3 186.0 193.0C189.6 189.7 194.7 186.2 199.5 183.0C204.3 179.8 210.1 176.4 215.0 173.5C219.9 170.6 225.1 167.5 229.0 165.5C232.9 163.5 235.6 162.2 238.5 161.5C241.4 160.8 243.9 160.8 246.5 161.5C249.1 162.2 252.8 165.2 254.0 166.0" stroke="#04b1cb" stroke-width="11.6" fill="none" stroke-linecap="round"/><path d="M179.0 215.0C178.8 213.0 176.8 206.7 178.0 203.0C179.2 199.3 182.4 196.3 186.0 193.0C189.6 189.7 194.7 186.2 199.5 183.0C204.3 179.8 210.1 176.4 215.0 173.5C219.9 170.6 225.1 167.5 229.0 165.5C232.9 163.5 235.6 162.2 238.5 161.5C241.4 160.8 243.9 160.8 246.5 161.5C249.1 162.2 252.8 165.2 254.0 166.0" stroke="#05b9d2" stroke-width="7.2" fill="none" stroke-linecap="round" transform="translate(-0.5,-0.8)"/><path d="M179.0 215.0C178.8 213.0 176.8 206.7 178.0 203.0C179.2 199.3 182.4 196.3 186.0 193.0C189.6 189.7 194.7 186.2 199.5 183.0C204.3 179.8 210.1 176.4 215.0 173.5C219.9 170.6 225.1 167.5 229.0 165.5C232.9 163.5 235.6 162.2 238.5 161.5C241.4 160.8 243.9 160.8 246.5 161.5C249.1 162.2 252.8 165.2 254.0 166.0" stroke="#0cc2da" stroke-width="3.4" fill="none" stroke-linecap="round" transform="translate(-0.8,-1.2)"/>
</g>
</svg>




















<div class="abs panel">
<svg class="abs" style="left:93.70000000000005px;top:11.5px" width="9" height="9" viewBox="0 0 9 9"><circle cx="4.5" cy="4.5" r="4.4" fill="#333"/><path d="M2.5 4.6L4 6.1L6.6 3.2" stroke="#fff" stroke-width="1.2" fill="none"/></svg><svg class="abs" style="left:88.20000000000005px;top:44.900000000000006px" width="9" height="9" viewBox="0 0 9 9"><circle cx="4.5" cy="4.5" r="4.4" fill="#333"/><path d="M2.5 4.6L4 6.1L6.6 3.2" stroke="#fff" stroke-width="1.2" fill="none"/></svg><svg class="abs" style="left:87.5px;top:241.3px" width="9" height="9" viewBox="0 0 9 9"><circle cx="4.5" cy="4.5" r="4.4" fill="#333"/><path d="M2.5 4.6L4 6.1L6.6 3.2" stroke="#fff" stroke-width="1.2" fill="none"/></svg><svg class="abs" style="left:403.5px;top:12.799999999999997px" width="8" height="6" viewBox="0 0 8 6"><path d="M1.2 4.5L3.9 1.8L6.6 4.5" stroke="#1c2b5c" stroke-width="1.4" fill="none"/></svg><svg class="abs" style="left:403.5px;top:46.2px" width="8" height="6" viewBox="0 0 8 6"><path d="M1.2 1.5L3.9 4.2L6.6 1.5" stroke="#1c2b5c" stroke-width="1.4" fill="none"/></svg><svg class="abs" style="left:403.5px;top:241.5px" width="8" height="6" viewBox="0 0 8 6"><path d="M1.2 4.5L3.9 1.8L6.6 4.5" stroke="#1c2b5c" stroke-width="1.4" fill="none"/></svg>
 <div class="abs ah" style="top:9px">Select 3D Model</div>
 <div class="abs div" style="top:32px"></div>
 <div class="abs ah" style="top:42px">Select 3D Parts</div>
 <div class="abs box">
  <div class="it" style="left:5px;top:5px"><i></i>Lining</div>
  <div class="it" style="left:5px;top:23px"><i></i>Vamp</div>
  <div class="it on" style="left:5px;top:41px"><i></i>Quarter</div>
  <div class="it" style="left:5px;top:59px"><i></i>Lace</div>
  <div class="it" style="left:5px;top:77px"><i></i>Heel_sole</div>
  <div class="it" style="left:5px;top:95px"><i></i>Toe_sole</div>
  <div class="it" style="left:5px;top:113px"><i></i>Logo</div>
  <div class="it" style="left:135px;top:5px"><i></i>Heel_Tab</div>
  <div class="it" style="left:135px;top:23px"><i></i>Toecap</div>
  <div class="it" style="left:135px;top:41px"><i></i>Upper</div>
  <div class="it" style="left:135px;top:59px"><i></i>Eyestay</div>
  <div class="it" style="left:135px;top:77px"><i></i>Outersole</div>
  <div class="it" style="left:135px;top:95px"><i></i>Seam</div>
  <div class="it" style="left:265px;top:5px"><i></i>Heel_Counter</div>
  <div class="it" style="left:265px;top:23px"><i></i>Inner_sole</div>
  <div class="it" style="left:265px;top:41px"><i></i>Tongue_1</div>
  <div class="it" style="left:265px;top:59px"><i></i>Outsole_1</div>
  <div class="it hl" style="left:265px;top:77px"><i></i>Outsole_2</div>
  <div class="it" style="left:265px;top:95px"><i></i>Tongue_2</div>
 </div>
 <div class="abs div" style="top:228px"></div>
 <div class="abs ah" style="top:238px">Select Material</div>
</div>
<svg class="abs" style="left:34.7px;top:489.2px" width="10" height="10" viewBox="0 0 10 10"><circle cx="5" cy="5" r="5" fill="#0f5a96"/><text x="5" y="7.9" font-size="8" font-weight="bold" fill="#fff" text-anchor="middle" font-family="Liberation Sans,sans-serif">?</text></svg>
<div class="abs" style="left:48px;top:489px;font-size:9.5px;line-height:12px;color:#1b2a5a">Only one 3D model and one material category possible</div>
<div class="abs btn" style="left:925px;width:37px;background:#0b5387">Close</div>
<div class="abs btn" style="left:972px;width:35px;background:#3b9fe3">Save</div>
<div class="abs" id="btm" style="left:95px;top:515px;width:840px;height:6px;background:linear-gradient(#fff,#fbfbfb)"></div>
</body></html>
